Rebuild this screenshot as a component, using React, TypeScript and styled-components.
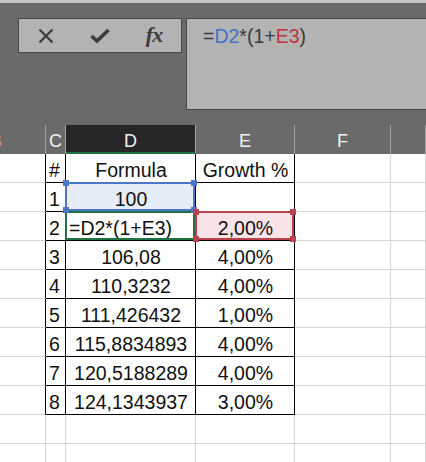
import React from "react";
import styled, { createGlobalStyle } from "styled-components";

const GlobalStyle = createGlobalStyle`
	html, body {
		margin: 0;
		padding: 0;
		background: #fff;
	}
	body {
		font-family: "Liberation Sans", Arial, sans-serif;
		overflow: hidden;
	}
`;

const GRID_COLS = "46px 20px 130px 99px 96px 1fr";
const BLACK = "#000";
const GRIDLINE = "#d4d4d4";

const Sheet = styled.div`
	width: 426px;
	height: 462px;
	overflow: hidden;
	background: #fff;
`;

const Ribbon = styled.div`
	box-sizing: border-box;
	height: 125px;
	background: #6a6a6a;
	border-top: 3px solid #c4c4c4;
	display: flex;
	align-items: flex-start;
	gap: 4px;
	padding: 15px 0 0 18px;
`;

const ButtonBox = styled.div`
	box-sizing: border-box;
	width: 164px;
	height: 35px;
	background: #b3b3b3;
	border: 1px solid #474747;
	display: grid;
	grid-template-columns: repeat(3, 1fr);
	align-items: center;
	justify-items: center;
`;

const FxLabel = styled.span`
	font-family: "Liberation Serif", "Times New Roman", serif;
	font-style: italic;
	font-weight: bold;
	font-size: 22px;
	color: #3c3c3c;
	letter-spacing: -1px;
	margin-top: -2px;
`;

const FormulaBox = styled.div`
	box-sizing: border-box;
	flex: 1;
	height: 92px;
	background: #b3b3b3;
	border: 1px solid #474747;
	border-right: none;
	padding: 6px 16px;
	font-size: 19.5px;
	color: #3a3a3a;
	white-space: nowrap;
`;

const Ref = styled.span<{ $color: string }>`
	color: ${(p) => p.$color};
`;

const HeaderRow = styled.div`
	display: grid;
	grid-template-columns: ${GRID_COLS};
	height: 29px;
	background: #6a6a6a;
`;

const ColHeader = styled.div<{ $active?: boolean }>`
	box-sizing: border-box;
	overflow: hidden;
	border-right: 1px solid #a3a3a3;
	border-bottom: ${(p) => (p.$active ? "2px solid #217346" : "none")};
	background: ${(p) => (p.$active ? "#262626" : "transparent")};
	color: #f2f2f2;
	font-size: 18px;
	line-height: 22px;
	padding-top: 5px;
	text-align: center;
`;

const ClippedLetter = styled.span`
	display: block;
	text-align: left;
	margin-left: -10px;
	color: #d99b5c;
`;

const Grid = styled.div`
	display: grid;
	grid-template-columns: ${GRID_COLS};
	grid-auto-rows: 29px;
`;

const Cell = styled.div<{
	$right: string;
	$bottom: string;
	$align: "left" | "center";
	$fill?: string;
}>`
	position: relative;
	box-sizing: border-box;
	border-right: 1px solid ${(p) => p.$right};
	border-bottom: 1px solid ${(p) => p.$bottom};
	background: ${(p) => p.$fill || "#fff"};
	text-align: ${(p) => p.$align};
	padding: 5px 2px 0 3px;
	font-size: 19.5px;
	line-height: 22px;
	color: #111;
	white-space: nowrap;
`;

const Range = styled.div<{ $color: string }>`
	position: absolute;
	top: -1px;
	left: -1px;
	right: 0;
	bottom: 0;
	border: 2px solid ${(p) => p.$color};
	pointer-events: none;
	z-index: ${(p) => (p.$color === "#217346" ? 1 : 2)};
`;

const Handle = styled.div<{ $color: string; $v: "top" | "bottom"; $h: "left" | "right" }>`
	position: absolute;
	width: 6px;
	height: 6px;
	background: ${(p) => p.$color};
	${(p) => p.$v}: -4px;
	${(p) => p.$h}: -4px;
`;

const rows: [string, string, string][] = [
	["#", "Formula", "Growth %"],
	["1", "100", ""],
	["2", "=D2*(1+E3)", "2,00%"],
	["3", "106,08", "4,00%"],
	["4", "110,3232", "4,00%"],
	["5", "111,426432", "1,00%"],
	["6", "115,8834893", "4,00%"],
	["7", "120,5188289", "4,00%"],
	["8", "124,1343937", "3,00%"],
	["", "", ""],
	["", "", ""],
];

const BLUE = "#4a78c6";
const RED = "#b8434f";
const GREEN = "#217346";

function RangeBox({ color, handles }: { color: string; handles?: boolean }) {
	return (
		<Range $color={color}>
			{handles && (
				<>
					<Handle $color={color} $v="top" $h="left" />
					<Handle $color={color} $v="top" $h="right" />
					<Handle $color={color} $v="bottom" $h="left" />
					<Handle $color={color} $v="bottom" $h="right" />
				</>
			)}
		</Range>
	);
}

function App() {
	return (
		<Sheet>
			<GlobalStyle />
			<Ribbon>
				<ButtonBox>
					<svg width="18" height="16" viewBox="0 0 18 16">
						<path d="M2.5 1.5 L15.5 14.5 M15.5 1.5 L2.5 14.5" stroke="#3c3c3c" strokeWidth="2.3" fill="none" />
					</svg>
					<svg width="20" height="16" viewBox="0 0 20 16">
						<path d="M1.5 8 L7 13 L18.5 2" stroke="#3c3c3c" strokeWidth="3.6" fill="none" strokeLinejoin="miter" />
					</svg>
					<FxLabel>fx</FxLabel>
				</ButtonBox>
				<FormulaBox>
					=<Ref $color="#3f72c4">D2</Ref>*(1+<Ref $color="#c0333f">E3</Ref>)
				</FormulaBox>
			</Ribbon>
			<HeaderRow>
				<ColHeader>
					<ClippedLetter>B</ClippedLetter>
				</ColHeader>
				<ColHeader>C</ColHeader>
				<ColHeader $active>D</ColHeader>
				<ColHeader>E</ColHeader>
				<ColHeader>F</ColHeader>
				<ColHeader />
			</HeaderRow>
			<Grid>
				{rows.map((row, r) => {
					const inTable = r <= 8;
					const cells = ["", ...row, "", ""];
					return cells.map((text, c) => {
						const tableCell = inTable && c >= 1 && c <= 3;
						const right = tableCell || (inTable && c === 0) ? BLACK : GRIDLINE;
						const bottom = tableCell ? BLACK : GRIDLINE;
						let fill: string | undefined;
						let overlay: React.ReactNode = null;
						if (r === 1 && c === 2) {
							fill = "#e6edf8";
							overlay = <RangeBox color={BLUE} handles />;
						}
						if (r === 2 && c === 2) overlay = <RangeBox color={GREEN} />;
						if (r === 2 && c === 3) {
							fill = "#f8e4e6";
							overlay = <RangeBox color={RED} handles />;
						}
						const align = c === 1 || (r === 2 && c === 2) ? "left" : "center";
						return (
							<Cell key={`${r}-${c}`} $right={right} $bottom={bottom} $align={align} $fill={fill}>
								{text}
								{overlay}
							</Cell>
						);
					});
				})}
			</Grid>
		</Sheet>
	);
}

export default App;
